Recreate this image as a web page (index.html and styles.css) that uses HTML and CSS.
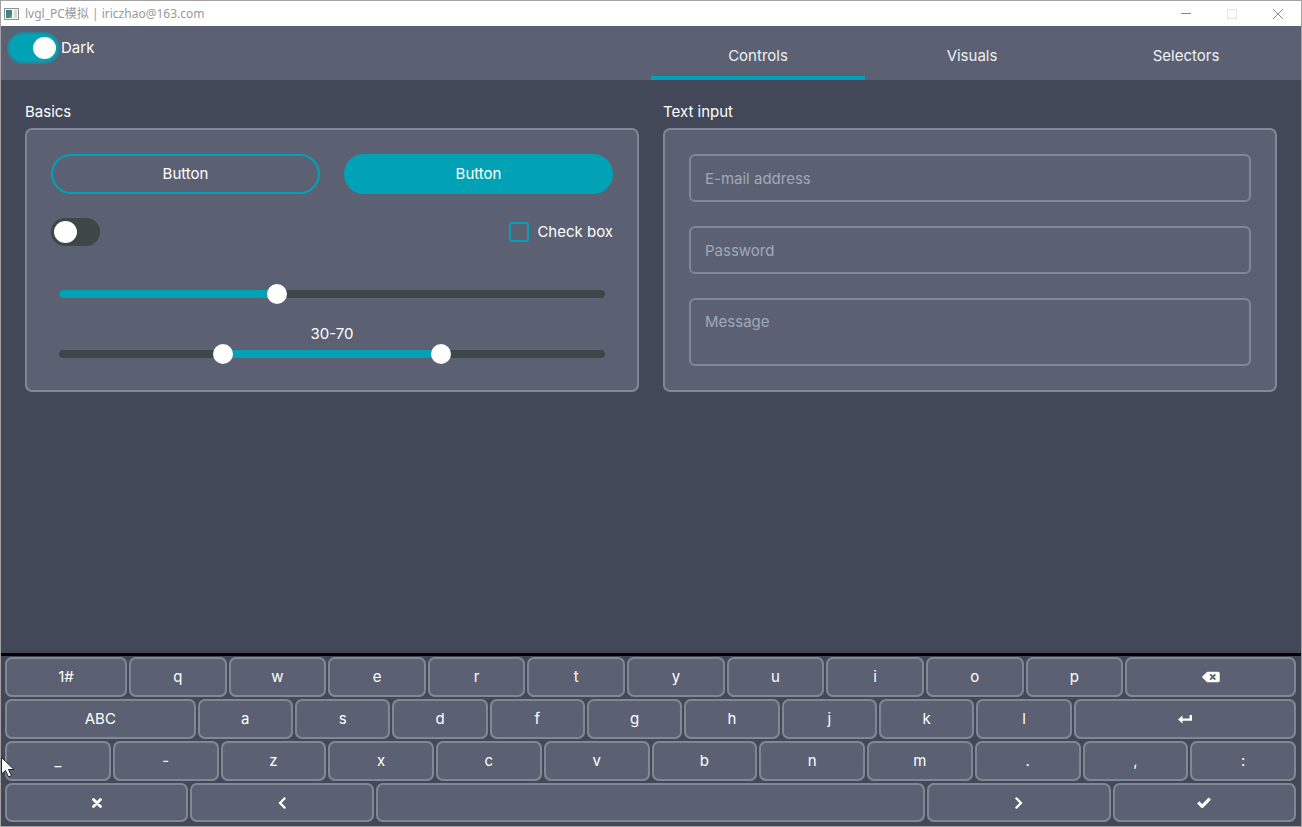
FILE: index.html
```
<!DOCTYPE html>
<html lang="en">
    <head>
        <title>lvgl_PC模拟</title>
        <meta charset="utf-8"/>
        <link rel="stylesheet" href="styles.css">
    </head>
    <body>
    <div class="window">

        <div class="titlebar">
            <svg class="app-icon" width="15" height="12" viewBox="0 0 15 12">
                <rect x="0.5" y="0.5" width="14" height="11" fill="#f4f4f4" stroke="#8e9494"/>
                <rect x="2" y="2" width="6" height="8" fill="#3f8580"/>
                <path d="M2 2h3l-3 4z" fill="#4a6f95"/>
                <path d="M8 6v4H5z" fill="#5fae7c"/>
                <path d="M10 3h3M10 5h3M10 7h3M10 9h3" stroke="#b9bcbc"/>
            </svg>
            <span class="title">lvgl_PC模拟 | iriczhao@163.com</span>
            <div class="window-buttons">
                <button type="button" aria-label="Minimize">
                    <svg width="10" height="10"><path d="M0 4.5h10" stroke="#8a8a8a"/></svg>
                </button>
                <button type="button" aria-label="Maximize" disabled>
                    <svg width="10" height="10"><rect x="0.5" y="0.5" width="9" height="9" fill="none" stroke="#e4e4e4"/></svg>
                </button>
                <button type="button" aria-label="Close">
                    <svg width="10" height="10"><path d="M0 0l10 10M10 0L0 10" stroke="#8a8a8a"/></svg>
                </button>
            </div>
        </div>

        <div class="header">
            <div class="theme">
                <input type="checkbox" class="switch focused" id="dark" checked>
                <label for="dark">Dark</label>
            </div>
            <div class="tabs">
                <button type="button" class="tab active">Controls</button>
                <button type="button" class="tab">Visuals</button>
                <button type="button" class="tab">Selectors</button>
            </div>
        </div>

        <div class="content">
            <div class="section">
                <h2>Basics</h2>
                <div class="card">
                    <div class="buttons">
                        <button type="button" class="btn">Button</button>
                        <button type="button" class="btn checked">Button</button>
                    </div>
                    <div class="toggles">
                        <input type="checkbox" class="switch" aria-label="Switch">
                        <label class="check"><input type="checkbox">Check box</label>
                    </div>
                    <div class="slider first">
                        <div class="fill" style="width: 40%"></div>
                        <input type="range" value="40" aria-label="Slider">
                    </div>
                    <div class="range-label">30-70</div>
                    <div class="slider">
                        <div class="fill" style="margin-left: 30%; width: 40%"></div>
                        <input type="range" value="30" aria-label="From">
                        <input type="range" value="70" aria-label="To">
                    </div>
                </div>
            </div>

            <div class="section">
                <h2>Text input</h2>
                <form class="card fields">
                    <input type="email" name="email" placeholder="E-mail address" aria-label="E-mail address">
                    <input type="password" name="password" placeholder="Password" aria-label="Password">
                    <textarea name="message" placeholder="Message" aria-label="Message"></textarea>
                </form>
            </div>
        </div>

        <div class="keyboard">
            <div class="keys">
                <button type="button" class="w5">1#</button>
                <button type="button" class="w4">q</button>
                <button type="button" class="w4">w</button>
                <button type="button" class="w4">e</button>
                <button type="button" class="w4">r</button>
                <button type="button" class="w4">t</button>
                <button type="button" class="w4">y</button>
                <button type="button" class="w4">u</button>
                <button type="button" class="w4">i</button>
                <button type="button" class="w4">o</button>
                <button type="button" class="w4">p</button>
                <button type="button" class="w7" aria-label="Backspace">
                    <svg width="18" height="14" viewBox="0 0 640 512"><path fill="#fff" d="M576 64H205a64 64 0 0 0-45 19L9 233a32 32 0 0 0 0 46l151 150a64 64 0 0 0 45 19h371a64 64 0 0 0 64-64V128a64 64 0 0 0-64-64z"/><path d="M290 162l188 188M478 162L290 350" stroke="#5b6172" stroke-width="70"/></svg>
                </button>
            </div>
            <div class="keys">
                <button type="button" class="w6">ABC</button>
                <button type="button" class="w3">a</button>
                <button type="button" class="w3">s</button>
                <button type="button" class="w3">d</button>
                <button type="button" class="w3">f</button>
                <button type="button" class="w3">g</button>
                <button type="button" class="w3">h</button>
                <button type="button" class="w3">j</button>
                <button type="button" class="w3">k</button>
                <button type="button" class="w3">l</button>
                <button type="button" class="w7" aria-label="Enter">
                    <svg width="14" height="10" viewBox="0 0 14 10"><path fill="#fff" d="M0 5.5L4.5 1.5V4.4H11.6V1H14V6.8H4.5V9.5z"/></svg>
                </button>
            </div>
            <div class="keys">
                <button type="button">_</button>
                <button type="button">-</button>
                <button type="button">z</button>
                <button type="button">x</button>
                <button type="button">c</button>
                <button type="button">v</button>
                <button type="button">b</button>
                <button type="button">n</button>
                <button type="button">m</button>
                <button type="button">.</button>
                <button type="button">,</button>
                <button type="button">:</button>
            </div>
            <div class="keys last">
                <button type="button" class="w2" aria-label="Close keyboard">
                    <svg width="10" height="10" viewBox="0 0 10 10"><path d="M1.5 1.5l7 7M8.5 1.5l-7 7" stroke="#fff" stroke-width="2.8" stroke-linecap="round"/></svg>
                </button>
                <button type="button" class="w2" aria-label="Left">
                    <svg width="8" height="12" viewBox="0 0 8 12"><path d="M6.6 1.4L2 6l4.6 4.6" fill="none" stroke="#fff" stroke-width="2.2" stroke-linecap="round"/></svg>
                </button>
                <button type="button" class="w6" aria-label="Space"></button>
                <button type="button" class="w2" aria-label="Right">
                    <svg width="8" height="12" viewBox="0 0 8 12"><path d="M1.4 1.4L6 6l-4.6 4.6" fill="none" stroke="#fff" stroke-width="2.2" stroke-linecap="round"/></svg>
                </button>
                <button type="button" class="w2" aria-label="OK">
                    <svg width="14" height="11" viewBox="0 0 14 11"><path d="M1.2 5.4l4 4L12.8 1.6" fill="none" stroke="#fff" stroke-width="3.2"/></svg>
                </button>
            </div>
        </div>

        <svg class="cursor" width="14" height="22" viewBox="0 0 14 22"><path d="M0.5 0.5V17l4-3.5 3 6.5 3-1.4-3-6.1H13z" fill="#fff" stroke="#22242c"/></svg>
    </div>
    </body>
</html>
```
FILE: styles.css
```
* {
  box-sizing: border-box;
}
body {
  margin: 0;
  font-family: Inter, sans-serif;
  font-size: 15px;
  line-height: 16px;
  color: #fff;
}
button, input, textarea {
  font: inherit;
  color: inherit;
  margin: 0;
}
button {
  padding: 0;
  border: none;
  background: none;
}
svg {
  display: block;
}
.window {
  position: relative;
  display: flex;
  flex-direction: column;
  min-height: 100vh;
  border: 1px solid #a2a2a2;
  background: #434859;
}

/* title bar */
.titlebar {
  display: flex;
  align-items: center;
  height: 25px;
  padding-left: 3px;
  background: #fff;
}
.title {
  flex: 1;
  margin-left: 6px;
  font-family: "Noto Sans", "Noto Sans CJK SC", sans-serif;
  font-size: 12px;
  color: #999;
}
.window-buttons {
  display: flex;
}
.window-buttons button {
  display: flex;
  align-items: center;
  justify-content: center;
  width: 46px;
  height: 24px;
}

/* header */
.header {
  display: flex;
  height: 54px;
  background: #5b6172;
}
.theme {
  display: flex;
  align-items: center;
  gap: 3px;
  width: 50%;
  height: 44px;
  padding-left: 8px;
}
.tabs {
  display: flex;
  width: 50%;
  padding-right: 8px;
}
.tab {
  flex: 1;
  padding-top: 10px;
  border-bottom: 4px solid transparent;
  color: #eef1f4;
}
.tab.active {
  border-color: #01a2b6;
}

.switch {
  appearance: none;
  flex: none;
  width: 49px;
  height: 28px;
  padding: 3px 2px 3px 3px;
  border-radius: 14px;
  background: #3f4647;
}
.switch::before {
  content: "";
  display: block;
  width: 23px;
  height: 22px;
  border-radius: 50%;
  background: #fff;
}
.switch:checked {
  background: #01a2b6;
}
.switch:checked::before {
  margin-left: auto;
}
.switch.focused {
  box-shadow: 0 0 0 2px #2b8496;
}

/* content */
.content {
  flex: 1;
  display: grid;
  grid-template-columns: 1fr 1fr;
  align-items: start;
  gap: 24px;
  padding: 24px;
}
h2 {
  margin: 0 0 8px;
  font-size: 15px;
  font-weight: 400;
}
.card {
  height: 264px;
  padding: 24px;
  border: 2px solid #808893;
  border-radius: 7px;
  background: #5b6172;
}
.buttons {
  display: flex;
  gap: 24px;
}
.btn {
  flex: 1;
  height: 40px;
  border: 2px solid #01a2b6;
  border-radius: 20px;
}
.btn.checked {
  background: #01a2b6;
}
.toggles {
  display: flex;
  justify-content: space-between;
  align-items: center;
  margin-top: 24px;
}
.check {
  display: flex;
  align-items: center;
  gap: 8px;
}
.check input {
  appearance: none;
  width: 20px;
  height: 20px;
  border: 2px solid #01a2b6;
  border-radius: 3px;
}
.slider {
  position: relative;
  height: 8px;
  margin: 0 8px;
  border-radius: 4px;
  background: #3f4647;
}
.slider.first {
  margin-top: 44px;
}
.slider .fill {
  height: 8px;
  border-radius: 4px;
  background: #01a2b6;
}
/* the knob centre runs to both ends of the track */
.slider input {
  appearance: none;
  position: absolute;
  top: -6px;
  left: -10px;
  width: calc(100% + 20px);
  height: 20px;
  background: none;
  pointer-events: none;
}
.slider input::-webkit-slider-thumb {
  appearance: none;
  width: 20px;
  height: 20px;
  border-radius: 50%;
  background: #fff;
  pointer-events: auto;
}
.range-label {
  margin: 28px 0 8px;
  text-align: center;
}

.fields {
  display: flex;
  flex-direction: column;
  gap: 24px;
}
.fields input, .fields textarea {
  width: 100%;
  height: 48px;
  padding: 14px;
  border: 2px solid #808893;
  border-radius: 6px;
  background: none;
  resize: none;
}
.fields textarea {
  height: 68px;
}
.fields ::placeholder {
  color: #a0a9b9;
  opacity: 1;
}

/* keyboard */
.keyboard {
  display: flex;
  flex-direction: column;
  gap: 2px;
  padding: 1px 5px 4px 4px;
  border-top: 3px solid #000;
}
.keys {
  display: flex;
  gap: 2px;
  height: 40px;
}
.keys.last {
  height: 39px;
}
/* inset shadow, so the frame does not count in the key widths */
.keys button {
  flex: 1 1 0;
  display: flex;
  align-items: center;
  justify-content: center;
  box-shadow: inset 0 0 0 2px #808893;
  border-radius: 7px;
  background: #5b6172;
}
.keys .w2 { flex-grow: 2; }
.keys .w3 { flex-grow: 3; }
.keys .w4 { flex-grow: 4; }
.keys .w5 { flex-grow: 5; }
.keys .w6 { flex-grow: 6; }
.keys .w7 { flex-grow: 7; }

.cursor {
  position: absolute;
  left: 0;
  top: 756px;
}
```
